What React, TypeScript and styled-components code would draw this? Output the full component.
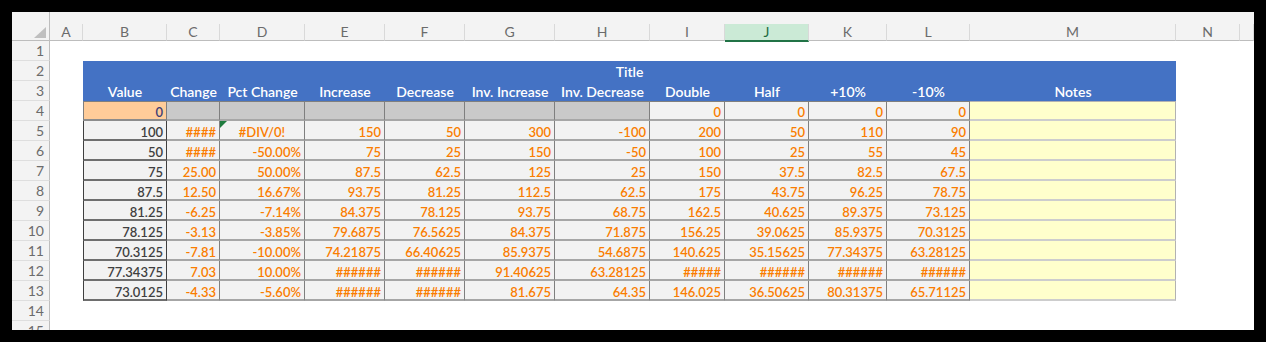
import React from 'react';
import styled, { createGlobalStyle, css } from 'styled-components';

const GlobalStyle = createGlobalStyle`
  html, body { margin: 0; padding: 0; background: #000; overflow: hidden; }
  body { font-family: Lato, "Liberation Sans", sans-serif; }
`;

const Frame = styled.div`
  box-sizing: border-box;
  width: 1266px;
  height: 342px;
  padding: 12px;
`;

const Sheet = styled.div`
  width: 1242px;
  height: 318px;
  background: #fff;
  overflow: hidden;
  display: grid;
  grid-template-columns: 38px 33px 84px 53px 85px 80px 80px 90px 95px 75px 84px 78px 83px 206px 64px 1fr;
  grid-template-rows: 29px;
  grid-auto-rows: 20px;
`;

const Corner = styled.div`
  box-sizing: border-box;
  background: #f3f3f3;
  border-right: 1px solid #bdbdbd;
  border-bottom: 1px solid #bdbdbd;
  display: flex;
  align-items: flex-end;
  justify-content: flex-end;
  padding: 0 3px 2px 0;
`;

const ColHeader = styled.div`
  box-sizing: border-box;
  background: #f3f3f3;
  padding-top: 12px;
  display: flex;
  flex-direction: column;
`;

const ColLabel = styled.div<{ $active?: boolean }>`
  box-sizing: border-box;
  flex: 1;
  display: flex;
  align-items: center;
  justify-content: center;
  font-size: 14px;
  line-height: 16px;
  color: ${(p) => (p.$active ? '#1d6a40' : '#6b6b6b')};
  background: ${(p) => (p.$active ? '#cbead6' : 'transparent')};
  border-right: 1px solid #d9d9d9;
  border-bottom: ${(p) => (p.$active ? '2px solid #217346' : '1px solid #bdbdbd')};
`;

const RowHeader = styled.div`
  box-sizing: border-box;
  background: #f3f3f3;
  border-right: 1px solid #bdbdbd;
  border-bottom: 1px solid #dedede;
  display: flex;
  align-items: center;
  justify-content: flex-end;
  padding-right: 5px;
  font-size: 14px;
  color: #6b6b6b;
`;

const Blank = styled.div``;

const TitleBand = styled.div`
  grid-column: span 12;
  box-sizing: border-box;
  background: #4472c4;
  color: #fff;
  font-size: 14px;
  font-weight: 600;
  line-height: 14px;
  display: flex;
  align-items: flex-end;
  justify-content: center;
  padding-bottom: 2px;
`;

const HeadCell = styled.div`
  box-sizing: border-box;
  background: #4472c4;
  color: #fff;
  font-size: 14px;
  font-weight: 600;
  line-height: 14px;
  white-space: nowrap;
  display: flex;
  align-items: flex-end;
  justify-content: center;
  padding-bottom: 2px;
`;

type Kind = 'input' | 'output' | 'calc' | 'gray' | 'note';

const kinds: Record<Kind, { bg: string; fg: string; v: string; h: string }> = {
  input: { bg: '#ffcc99', fg: '#3f3f76', v: '#7f7f7f', h: '#8c8c8c' },
  output: { bg: '#f2f2f2', fg: '#3f3f3f', v: '#3f3f3f', h: '#6e6e6e' },
  calc: { bg: '#f2f2f2', fg: '#fa7d00', v: '#7f7f7f', h: '#a6a6a6' },
  gray: { bg: '#c9c9c9', fg: '#3f3f3f', v: '#7f7f7f', h: '#a6a6a6' },
  note: { bg: '#ffffcc', fg: '#3f3f3f', v: '#b2b2b2', h: '#cdcdcd' },
};

const DataCell = styled.div<{ $kind: Kind; $center?: boolean; $top?: boolean; $left?: boolean }>`
  position: relative;
  box-sizing: border-box;
  display: flex;
  align-items: flex-end;
  justify-content: ${(p) => (p.$center ? 'center' : 'flex-end')};
  padding: 0 3px;
  font-size: 13px;
  font-weight: 600;
  line-height: 14px;
  white-space: nowrap;
  overflow: hidden;
  ${(p) => {
    const k = kinds[p.$kind];
    return css`
      background: ${k.bg};
      color: ${k.fg};
      border-right: 1px solid ${k.v};
      border-bottom: 2px solid ${k.h};
      ${p.$top ? `border-top: 1px solid ${p.$kind === 'note' ? '#b2b2b2' : '#7f7f7f'};` : ''}
      ${p.$left ? `border-left: 1px solid ${k.v};` : ''}
    `;
  }}
`;

const ErrorMark = styled.span`
  position: absolute;
  top: 0;
  left: 0;
  width: 0;
  height: 0;
  border-top: 7px solid #1e7b3e;
  border-right: 7px solid transparent;
`;

const LETTERS = ['A', 'B', 'C', 'D', 'E', 'F', 'G', 'H', 'I', 'J', 'K', 'L', 'M', 'N'];

const HEADERS = [
  'Value', 'Change', 'Pct Change', 'Increase', 'Decrease', 'Inv. Increase',
  'Inv. Decrease', 'Double', 'Half', '+10%', '-10%', 'Notes',
];

const DATA: string[][] = [
  ['100', '####', '#DIV/0!', '150', '50', '300', '-100', '200', '50', '110', '90'],
  ['50', '####', '-50.00%', '75', '25', '150', '-50', '100', '25', '55', '45'],
  ['75', '25.00', '50.00%', '87.5', '62.5', '125', '25', '150', '37.5', '82.5', '67.5'],
  ['87.5', '12.50', '16.67%', '93.75', '81.25', '112.5', '62.5', '175', '43.75', '96.25', '78.75'],
  ['81.25', '-6.25', '-7.14%', '84.375', '78.125', '93.75', '68.75', '162.5', '40.625', '89.375', '73.125'],
  ['78.125', '-3.13', '-3.85%', '79.6875', '76.5625', '84.375', '71.875', '156.25', '39.0625', '85.9375', '70.3125'],
  ['70.3125', '-7.81', '-10.00%', '74.21875', '66.40625', '85.9375', '54.6875', '140.625', '35.15625', '77.34375', '63.28125'],
  ['77.34375', '7.03', '10.00%', '######', '######', '91.40625', '63.28125', '#####', '######', '######', '######'],
  ['73.0125', '-4.33', '-5.60%', '######', '######', '81.675', '64.35', '146.025', '36.50625', '80.31375', '65.71125'],
];

const blanks = (n: number, prefix: string) =>
  Array.from({ length: n }, (_, i) => <Blank key={`${prefix}-${i}`} />);

export default function App() {
  return (
    <Frame>
      <GlobalStyle />
      <Sheet>
        <Corner>
          <svg width="12" height="11" viewBox="0 0 12 11">
            <polygon points="12,0 12,11 0,11" fill="#bfbfbf" />
          </svg>
        </Corner>
        {LETTERS.map((l) => (
          <ColHeader key={l}>
            <ColLabel $active={l === 'J'}>{l}</ColLabel>
          </ColHeader>
        ))}
        <ColHeader>
          <ColLabel />
        </ColHeader>

        <RowHeader>1</RowHeader>
        {blanks(15, 'r1')}

        <RowHeader>2</RowHeader>
        <Blank />
        <TitleBand>Title</TitleBand>
        {blanks(2, 'r2')}

        <RowHeader>3</RowHeader>
        <Blank />
        {HEADERS.map((h) => (
          <HeadCell key={h}>{h}</HeadCell>
        ))}
        {blanks(2, 'r3')}

        <RowHeader>4</RowHeader>
        <Blank />
        <DataCell $kind="input" $top $left>0</DataCell>
        {Array.from({ length: 6 }, (_, i) => (
          <DataCell key={`g${i}`} $kind="gray" $top />
        ))}
        {Array.from({ length: 4 }, (_, i) => (
          <DataCell key={`z${i}`} $kind="calc" $top>0</DataCell>
        ))}
        <DataCell $kind="note" $top />
        {blanks(2, 'r4')}

        {DATA.map((row, ri) => (
          <React.Fragment key={`row${ri}`}>
            <RowHeader>{ri + 5}</RowHeader>
            <Blank />
            {row.map((v, ci) => {
              const isErr = v === '#DIV/0!';
              return (
                <DataCell
                  key={ci}
                  $kind={ci === 0 ? 'output' : 'calc'}
                  $left={ci === 0}
                  $center={isErr}
                >
                  {isErr && <ErrorMark />}
                  {v}
                </DataCell>
              );
            })}
            <DataCell $kind="note" />
            {blanks(2, `d${ri}`)}
          </React.Fragment>
        ))}

        {[14, 15].map((n) => (
          <React.Fragment key={`e${n}`}>
            <RowHeader>{n}</RowHeader>
            {blanks(15, `e${n}`)}
          </React.Fragment>
        ))}
      </Sheet>
    </Frame>
  );
}
